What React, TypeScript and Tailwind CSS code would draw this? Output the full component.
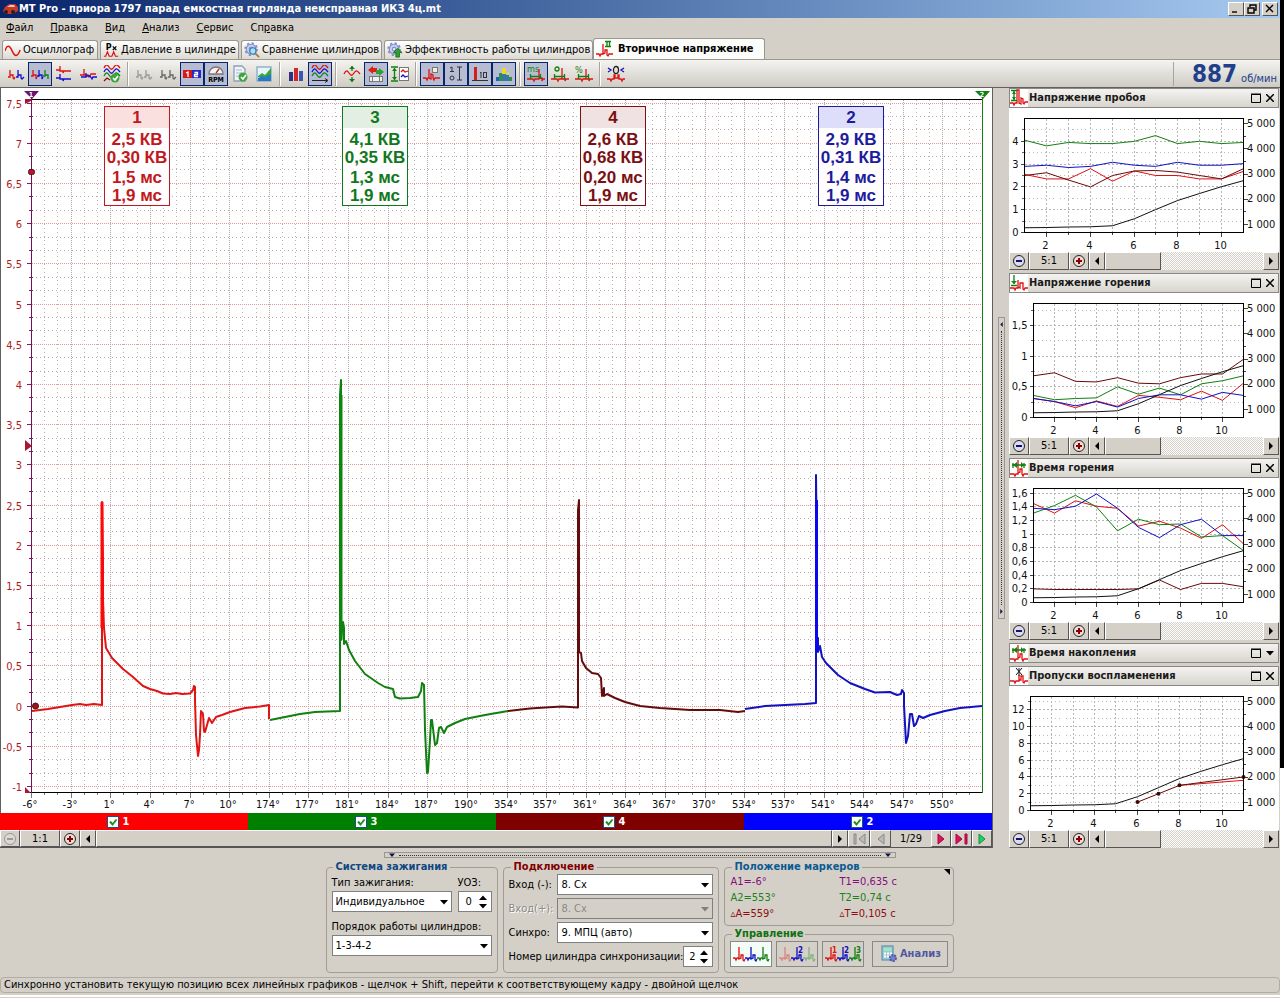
import React from 'react';

type Pt = [number, number];

const RED = '#e01010';
const GREEN = '#108010';
const MAROON = '#6a0808';
const BLUE = '#1010c8';

const bevel =
  'flex items-center justify-center bg-[#d4d0c8] border border-t-white border-l-white border-r-[#555] border-b-[#555]';

/* ---------- small shared bits ---------- */

const Arrow: React.FC<{ dir: 'left' | 'right' | 'down' | 'up'; color?: string; size?: number }> = ({ dir, color = '#000', size = 8 }) => {
  const d = {
    left: 'M6 0v8L2 4z',
    right: 'M2 0v8l4-4z',
    down: 'M0 2h8L4 6.5z',
    up: 'M0 6h8L4 1.5z',
  }[dir];
  return (
    <svg width={size} height={size} viewBox="0 0 8 8" className="shrink-0" aria-hidden="true">
      <path d={d} fill={color} />
    </svg>
  );
};

const ZoomSign: React.FC<{ kind: 'minus' | 'plus'; off?: boolean }> = ({ kind, off }) => {
  const c = off ? '#999' : kind === 'minus' ? '#10107a' : '#8c0000';
  return (
    <svg width="14" height="14" viewBox="0 0 14 14" aria-hidden="true">
      <circle cx="7" cy="7" r="5.5" fill={off ? '#dddad4' : kind === 'minus' ? '#dcdcec' : '#f0dcd8'} stroke={off ? '#999' : '#222'} />
      <path d={kind === 'minus' ? 'M4 7h6' : 'M4 7h6M7 4v6'} stroke={c} strokeWidth="2" />
    </svg>
  );
};

/* ---------- toolbar icons ---------- */

const S: React.FC<{ children: React.ReactNode; size?: number; className?: string }> = ({ children, size = 18, className = '' }) => (
  <svg width={size} height={size} viewBox="0 0 18 18" fill="none" strokeWidth="1.3" aria-hidden="true" className={`shrink-0 ${className}`}>
    {children}
  </svg>
);

const Wave: React.FC<{ y: number; c: string }> = ({ y, c }) => (
  <path d={`M1 ${y + 2}c2-4 3-4 5-1s3 3 5 0 3-3 6 1`} stroke={c} />
);

const PulseIcon: React.FC<{ a: string; b: string }> = ({ a, b }) => (
  <S>
    <path d="M1 12h2V5v5h3v3l1 1 1-2" stroke={a} />
    <path d="M9 12h2V5v5h3v3l1 1 2-2" stroke={b} />
  </S>
);

const icons: Record<string, React.ReactNode> = {
  parade: <PulseIcon a="#e01010" b="#1010d0" />,
  paradeAll: (
    <S>
      <path d="M0 11h2V5v5h3v4l1-2" stroke="#e01010" />
      <path d="M6 11h2V5v5h3v4l1-2" stroke="#1010d0" />
      <path d="M12 11h2V5v5h3v4" stroke="#108010" />
    </S>
  ),
  raster: (
    <S>
      <path d="M1 5h4V1v5h3v2l1-2h7" stroke="#e01010" />
      <path d="M1 13h4V9v5h3v2l1-2h7" stroke="#1010d0" />
    </S>
  ),
  overlay: (
    <S>
      <path d="M1 10h4V4v6h4l1 2 2-3h5" stroke="#e01010" />
      <path d="M2 12h5V8v3h4l2 3 1-2h4" stroke="#1010d0" />
    </S>
  ),
  wavesOk: (
    <S>
      <Wave y={1} c="#e01010" />
      <Wave y={5} c="#1010d0" />
      <Wave y={9} c="#108010" />
      <path d="M1 16l3-3 3 2" stroke="#8a1010" />
      <circle cx="12" cy="13" r="4.5" fill="#3fa63f" />
      <path d="M10 13l2 2 3-4" stroke="#fff" strokeWidth="1.6" />
    </S>
  ),
  offA: <PulseIcon a="#999" b="#999" />,
  offB: <PulseIcon a="#666" b="#666" />,
  onetwo: (
    <S>
      <rect x="0" y="5" width="9" height="8" fill="#d81818" />
      <rect x="9" y="5" width="9" height="8" fill="#2828c8" />
      <path d="M3 8l2-1v5M11.5 7.500h3v2h-3v2h3.500" stroke="#fff" />
    </S>
  ),
  rpm: (
    <S>
      <path d="M2 9a7 7 0 0 1 14 0z" fill="#f4f4f4" stroke="#777" />
      <path d="M9 8l3-4" stroke="#d02020" />
      <text x="9" y="17" fontSize="7" fontWeight="bold" fill="#000" textAnchor="middle">RPM</text>
    </S>
  ),
  pageOk: (
    <S>
      <path d="M3 1h8l3 3v12H3z" fill="#eef4fa" stroke="#8aa0b8" />
      <path d="M5 5h6M5 8h6M5 11h4" stroke="#a8b8c8" strokeWidth="1" />
      <circle cx="12" cy="12" r="4.5" fill="#3fa63f" />
      <path d="M10 12l2 2 3-4" stroke="#fff" strokeWidth="1.6" />
    </S>
  ),
  chart: (
    <S>
      <rect x="2" y="2" width="14" height="14" fill="#e8f4fc" stroke="#88a8c0" />
      <path d="M3 11l4-3 3 2 6-7v9H3z" fill="#38a838" />
      <path d="M3 13l4-2 3 1 6-3v7H3z" fill="#2878c8" />
    </S>
  ),
  bars: (
    <S>
      <path d="M2 7h4v9H2z" fill="#303088" />
      <path d="M7 3h4v13H7z" fill="#d02828" />
      <path d="M12 6h4v10h-4z" fill="#3858b8" />
    </S>
  ),
  waves: (
    <S>
      <Wave y={1} c="#e01010" />
      <Wave y={5} c="#1010d0" />
      <Wave y={9} c="#108010" />
      <path d="M1 15.500h15M14 13.500l3 2-3 2" stroke="#222" strokeWidth="1" />
    </S>
  ),
  vstretch: (
    <S>
      <Wave y={7} c="#e01010" />
      <path d="M9 1v5M9 12v5" stroke="#108010" />
      <path d="M6 4l3-3 3 3zM6 14l3 3 3-3z" fill="#108010" />
    </S>
  ),
  swap: (
    <S>
      <path d="M1 5l5-4v2h4v4H6v2z" fill="#e02010" />
      <path d="M17 7l-5-4v2H9v4h3v2z" fill="#30a030" />
      <rect x="2.500" y="11.500" width="13" height="5" fill="#f0f0f0" stroke="#777" strokeWidth="1" />
      <path d="M5.500 12v4M12.500 12v4" stroke="#777" strokeWidth="1" />
    </S>
  ),
  vfit: (
    <S>
      <path d="M0 2h7M0 16h7M3.500 3v12" stroke="#108010" />
      <path d="M1 6l2.500-3L6 6zM1 12l2.500 3L6 12z" fill="#108010" />
      <rect x="8.500" y="2.500" width="9" height="13" fill="#fff" stroke="#777" strokeWidth="1" />
      <path d="M10 7l2-2 2 2 3-1" stroke="#e01010" />
      <path d="M10 12l2-2 2 2 3-1" stroke="#1010d0" />
    </S>
  ),
  flag: (
    <S>
      <path d="M0 13h3l1 2 1-2h1V4v9l2 1V9l2 1v3l1 2 1-2h5" stroke="#e01010" />
      <rect x="9.500" y="2.500" width="5" height="5" fill="#f4ecd8" stroke="#777" strokeWidth="1" />
    </S>
  ),
  scale: (
    <S>
      <path d="M3 3l2-1v4M3 6.500h4M10 2h5M10 15h5M12.500 2v13" stroke="#333" strokeWidth="1" />
      <circle cx="5" cy="13" r="2" stroke="#333" strokeWidth="1" />
    </S>
  ),
  bar10: (
    <S>
      <path d="M3 2h3v13H3z" fill="#d02020" />
      <path d="M1 15.500h16M9 8l1-1v6" stroke="#333" strokeWidth="1" />
      <rect x="12.500" y="7.500" width="3" height="5" stroke="#333" strokeWidth="1" />
    </S>
  ),
  histogram: (
    <S>
      <path d="M1 12h3v4H1z" fill="#2060c0" />
      <path d="M4 8h3v8H4zM14 12h3v4h-3z" fill="#2f9048" />
      <path d="M7 3h4v6H7zM12 7h2v4h-2z" fill="#e8d830" />
      <path d="M7 9h4v7H7zM11 10h3v6h-3z" fill="#3878a8" />
    </S>
  ),
  ms: (
    <S>
      <text x="0" y="7" fontSize="9" fill="#108010">ms</text>
      <path d="M0 14h6l1 2 1-2h4V4v9h3v3l1-2h2" stroke="#e01010" />
      <path d="M3 11.500h11M3.500 9v5M13.500 9v5" stroke="#108010" />
    </S>
  ),
  deg: (
    <S>
      <circle cx="6" cy="4" r="2" stroke="#108010" />
      <path d="M0 14h6l1 2 1-2h3V3v11h3v2l1-2h3" stroke="#e01010" />
      <path d="M3 11.500h11M3.500 9v5M13.500 9v5" stroke="#108010" />
    </S>
  ),
  pct: (
    <S>
      <text x="0" y="8" fontSize="9" fill="#108010">%</text>
      <path d="M0 14h6l1 2 1-2h3V4v10h3v2l1-2h3" stroke="#e01010" />
      <path d="M3 11.500h11M3.500 9v5M13.500 9v5" stroke="#108010" />
    </S>
  ),
  zero: (
    <S>
      <path d="M1 3l3 2-3 2M17 3l-3 2 3 2" stroke="#1010b0" />
      <ellipse cx="9" cy="5" rx="2.500" ry="3.500" stroke="#222" />
      <path d="M0 14h3l1 2 1-2h2v-4h1v3h3v-3h1v4h2l1 2 1-2h2" stroke="#e01010" />
    </S>
  ),
};

/* ---------- header rows ---------- */

const toolGroups: [string, string, boolean?][][] = [
  [['parade', 'Парад'], ['paradeAll', 'Парад всех', true], ['raster', 'Растр'], ['overlay', 'Наложение'], ['wavesOk', 'Выбор сигналов']],
  [['offA', 'Кадр назад'], ['offB', 'Кадр вперёд'], ['onetwo', 'Номера цилиндров', true], ['rpm', 'Обороты', true], ['pageOk', 'Отчёт'], ['chart', 'График']],
  [['bars', 'Гистограмма'], ['waves', 'Осциллограммы', true]],
  [['vstretch', 'Растянуть'], ['swap', 'Инверсия', true], ['vfit', 'По высоте']],
  [['flag', 'Метки', true], ['scale', 'Шкала', true], ['bar10', 'Столбцы', true], ['histogram', 'Распределение', true]],
  [['ms', 'Миллисекунды', true], ['deg', 'Градусы'], ['pct', 'Проценты']],
  [['zero', 'Обнулить']],
];

const menu: [string, string, string][] = [
  ['', 'Ф', 'айл'],
  ['', 'П', 'равка'],
  ['', 'В', 'ид'],
  ['', 'А', 'нализ'],
  ['', 'С', 'ервис'],
  ['Сп', 'р', 'авка'],
];

const Gear: React.FC<{ children: React.ReactNode }> = ({ children }) => (
  <S size={16}>
    <circle cx="8" cy="8" r="5.500" fill="#c4d0ee" stroke="#8090c8" />
    <circle cx="8" cy="8" r="6.800" stroke="#8090c8" strokeWidth="1.800" strokeDasharray="2.600 2.700" />
    <circle cx="8" cy="8" r="2" fill="#f0f0f0" stroke="#8090c8" />
    {children}
  </S>
);

const tabs: { label: string; width: string; icon: React.ReactNode }[] = [
  {
    label: 'Осциллограф',
    width: 'w-24',
    icon: <S size={16}><path d="M0 10c2-7 5-7 8 0s6 7 9-1" stroke="#e01010" strokeWidth="1.600" /></S>,
  },
  {
    label: 'Давление в цилиндре',
    width: 'w-[139px]',
    icon: (
      <S size={16}>
        <text x="3" y="9" fontSize="10" fontWeight="bold" fill="#000">P</text>
        <path d="M11 5l4 4M15 5l-4 4" stroke="#000" />
        <path d="M1 16h2l2-5 2 5h3l2-5 2 5h3" stroke="#e01010" />
      </S>
    ),
  },
  {
    label: 'Сравнение цилиндров',
    width: 'w-[141px]',
    icon: (
      <Gear>
        <circle cx="10" cy="10" r="3.500" fill="#a8e0f4" stroke="#3878b0" />
        <path d="M13 13l4 4" stroke="#b07838" strokeWidth="2" />
      </Gear>
    ),
  },
  {
    label: 'Эффективность работы цилиндров',
    width: 'w-[209px]',
    icon: <Gear><path d="M12 7l5 5h-3v5h-4v-5H7z" fill="#30a030" stroke="#207020" strokeWidth="1" /></Gear>,
  },
];

/* ---------- main oscillogram ---------- */

const traces: { color: string; d: string }[] = [
  {
    color: '#e01414',
    d: 'M32 711L40 710 48 709 60 707 72 705 80 704 86 705 94 704 102 705V502L103 560V600L104 628 106 648 112 658 123 669 133 677 143 686 150 689 157 691 163 693.5 170 694 176 693 182 694 190 693.5 193 690 194 686 195 687 195 700 196 735 198 756 199 750 200 735 201 711 203 714 204 731 205 732 207 725 209 718 212 723 216 717 222 715 230 712 245 708 260 706.5 269 705V719',
  },
  {
    color: '#108010',
    d: 'M270 720L285 717 300 714 315 712 340 711V395L341 380V640L343 622 344 628V644L346 641 349 650 355 661 365 674 378 683 385 687 393 689 395 697 400 698.5 410 698 418 697 421 691 422 683 424 685 425 730 427 773 428 772 430 740 431 720 432 720 435 745 437 743 439 728 441 727 444 733 447 727 455 723 465 719 485 715 508 711',
  },
  {
    color: '#640c0c',
    d: 'M508 711L530 708.5 545 707.5 562 706.5 578 707.5V510L579 500V652L581 653 582 661 586 668 592 673 598 674 601 678 602 696 604 688V696L607 694 615 698 625 702 640 706 660 708 690 710 700 710 720 710 738 712 745 711',
  },
  {
    color: '#1212c0',
    d: 'M745 709L765 706 785 705 805 704 816 703V475L817 560V650L818 638V652L820 646 822 657 826 663 838 675 850 683 865 689 875 692.5 890 692 897 695 901 694 902 690 904 693V705L906 743 908 736 910 714 912 714 914 726 916 724 919 716 923 718 930 715 945 711 960 708 982 706',
  },
];

// the ignition peaks are drawn a little heavier than the rest of the trace
const spikes: { d: string; color: string }[] = [
  { d: 'M102 502V628', color: '#ff0808' },
  { d: 'M341 395V640', color: '#0c860c' },
  { d: 'M578.5 510V652', color: '#640c0c' },
  { d: 'M816.5 500V652', color: '#0808f0' },
];

const degrees = ['-6', '-3', '1', '4', '7', '10', '174', '177', '181', '184', '187', '190', '354', '357', '361', '364', '367', '370', '534', '537', '541', '544', '547', '550'];

const cards = [
  { x: 104, id: '1', rows: ['2,5 КВ', '0,30 КВ', '1,5 мс', '1,9 мс'], color: '#c01820', fill: '#fbe0e0' },
  { x: 342, id: '3', rows: ['4,1 КВ', '0,35 КВ', '1,3 мс', '1,9 мс'], color: '#107820', fill: '#e2efe2' },
  { x: 580, id: '4', rows: ['2,6 КВ', '0,68 КВ', '0,20 мс', '1,9 мс'], color: '#7a1014', fill: '#f0e2e2' },
  { x: 818, id: '2', rows: ['2,9 КВ', '0,31 КВ', '1,4 мс', '1,9 мс'], color: '#1c1c9c', fill: '#dedefa' },
];

const range = (n: number) => Array.from({ length: n }, (_, i) => i);
const volts = (v: number) => Math.round(705.5 - v * 80.4) + 0.5;

const Oscillogram: React.FC = () => (
  <svg viewBox="0 88 992 725" className="block h-auto w-full bg-white" role="img" aria-label="Вторичное напряжение">
    <g shapeRendering="crispEdges" strokeWidth="1" fill="none">
      <path d="M0.5 88V813" stroke="#606060" />
      {range(53).map(i => {
        const y = volts(7.5 - i / 6);
        return y < 791 && (
          <path key={i} d={`M32 ${y}H982`} stroke={i % 3 ? '#c4a8a8' : '#e09a9a'} strokeDasharray={i % 3 ? '1 3' : '1 1'} />
        );
      })}
      {range(71).map(i => {
        const x = Math.round(31 + (i + 1) * 13.21) + 0.5;
        return <path key={i} d={`M${x} 100V792`} stroke={i % 3 === 2 ? '#b0a8a8' : '#c0b4b4'} strokeDasharray={i % 3 === 2 ? '1 1' : '1 3'} />;
      })}
      <path d="M31 99.5H982M27 792.5H982" stroke="#000" />
      <path d="M31.5 92V793" stroke="#701060" />
      <path d="M982.5 92V793" stroke="#108010" />
      {range(53).map(i => {
        const y = volts(7.5 - i / 6);
        return y < 791 && <path key={i} d={i % 3 ? `M29 ${y}h4` : `M27 ${y}h5`} stroke="#8a1848" />;
      })}
      {range(72).map(i => (
        <path key={i} d={`M${Math.round(31 + i * 13.21) + 0.5} 793v${i % 3 ? 2 : 5}`} stroke="#777" />
      ))}
    </g>

    <g fontSize="11" fill="#b01c24" textAnchor="end">
      {range(18).map(i => (
        <text key={i} x="22" y={volts(7.5 - i / 2) + 4}>{String(7.5 - i / 2).replace('.', ',')}</text>
      ))}
    </g>
    <g fontSize="11" fill="#111" textAnchor="middle">
      {degrees.map((d, i) => (
        <text key={i} x={Math.round(30 + i * 39.64)} y="808">{d}°</text>
      ))}
    </g>

    {cards.map(c => (
      <g key={c.id} fontFamily="Liberation Sans, sans-serif" fontSize="17" fontWeight="bold" fill={c.color} textAnchor="middle">
        <rect x={c.x + 0.5} y="106.5" width="65" height="99" fill="#fffdfd" stroke={c.color} />
        <rect x={c.x + 1} y="107" width="64" height="21" fill={c.fill} />
        <text x={c.x + 33} y="123">{c.id}</text>
        {c.rows.map((r, i) => (
          <text key={i} x={c.x + 33} y={[145, 163, 183, 201][i]}>{r}</text>
        ))}
      </g>
    ))}

    {traces.map(t => (
      <path key={t.color} d={t.d} stroke={t.color} strokeWidth="2" fill="none" strokeLinejoin="round" />
    ))}
    {spikes.map(s => (
      <path key={s.d} d={s.d} stroke={s.color} strokeWidth="3" />
    ))}

    {/* markers on the axes */}
    <path d="M24 91h15l-7 8z" fill="#681470" />
    <path d="M975 91h15l-7 8z" fill="#108010" />
    <g fontSize="7" fontWeight="bold" fill="#fff" textAnchor="middle">
      <text x="31" y="97">1</text>
      <text x="982" y="97">2</text>
    </g>
    <path d="M25 99h6v2l-6 3zM25 787v6h6zM25 440v11l7-5z" fill="#a81830" />
    <rect x="28.5" y="169.5" width="6" height="5" rx="2" fill="#b81830" stroke="#5a1010" />
    <circle cx="35.5" cy="706" r="3" fill="#981818" stroke="#5a1010" />
  </svg>
);

const cylinders: [string, string][] = [
  ['1', 'bg-[#ff0000]'],
  ['3', 'bg-[#008000]'],
  ['4', 'bg-[#800000]'],
  ['2', 'bg-[#0000ff]'],
];

const CylinderBar: React.FC = () => (
  <div className="flex h-[17px]">
    {cylinders.map(([n, bg]) => (
      <label key={n} className={`flex flex-1 items-center justify-center gap-1 pr-3 font-bold text-white ${bg}`}>
        <span className="relative h-3 w-3">
          <input type="checkbox" defaultChecked className="peer block h-3 w-3 appearance-none border border-[#1c5180] bg-white" />
          <svg viewBox="0 0 12 12" className="pointer-events-none invisible absolute inset-0 h-3 w-3 peer-checked:visible" fill="none" aria-hidden="true">
            <path d="M3 5.5l2.5 3 4-5" stroke="#219021" strokeWidth="2" />
          </svg>
        </span>
        {n}
      </label>
    ))}
  </div>
);

const MainScroll: React.FC = () => (
  <div className="flex h-[18px] border-b border-[#555] bg-[#d4d0c8]">
    <button disabled aria-label="Уменьшить" className={`w-5 ${bevel}`}><ZoomSign kind="minus" off /></button>
    <button className={`w-10 ${bevel}`}>1:1</button>
    <button aria-label="Увеличить" className={`w-5 ${bevel}`}><ZoomSign kind="plus" /></button>
    <button aria-label="Влево" className={`w-4 ${bevel}`}><Arrow dir="left" /></button>
    <div className={`flex-1 ${bevel}`} />
    <button aria-label="Вправо" className={`w-4 ${bevel}`}><Arrow dir="right" /></button>
    <button disabled aria-label="Первый кадр" className={`w-[22px] ${bevel}`}>
      <svg width="13" height="12" viewBox="0 0 13 12" fill="#bbb" stroke="#888"><path d="M1 1h2v10H1zM12 1v10L6 6z" /></svg>
    </button>
    <button disabled aria-label="Предыдущий кадр" className={`w-[21px] ${bevel}`}>
      <svg width="8" height="12" viewBox="0 0 8 12" fill="#bbb" stroke="#888"><path d="M7 1v10L1 6z" /></svg>
    </button>
    <span className="flex w-10 items-center justify-center">1/29</span>
    <button aria-label="Следующий кадр" className={`w-5 ${bevel}`}>
      <svg width="8" height="12" viewBox="0 0 8 12" fill="#e01060" stroke="#a00840"><path d="M1 1v10l6-5z" /></svg>
    </button>
    <button aria-label="Последний кадр" className={`w-[21px] ${bevel}`}>
      <svg width="13" height="12" viewBox="0 0 13 12" fill="#e01060" stroke="#a00840"><path d="M1 1v10l6-5zM10 1h2v10h-2z" /></svg>
    </button>
    <button aria-label="Воспроизвести" className={`w-5 ${bevel}`}>
      <svg width="8" height="12" viewBox="0 0 8 12" fill="#20d060" stroke="#109040"><path d="M1 1v10l6-5z" /></svg>
    </button>
  </div>
);

/* ---------- side panels ---------- */

interface MiniProps {
  title: string;
  left: number;
  max: number;
  step: number;
  minor?: number;
  series: { color: string; pts: Pt[] }[];
  dots?: Pt[];
}

const seq = (v: number[]): Pt[] => v.map((y, i) => [i + 1, y]);
const rpm = [870, 880, 900, 910, 950, 1230, 1590, 1950, 2230, 2500, 2740];

const MiniChart: React.FC<MiniProps> = ({ title, left, max, step, minor, series, dots = [] }) => {
  const right = 234.5;
  const px = (x: number) => Math.round(left + ((x - 1) * (right - left)) / 10 - 0.5) + 0.5;
  const py = (v: number) => 124.5 - (v / max) * 114;
  const ry = (r: number) => 116.5 - (r - 1000) * 0.0252;
  const line = (pts: Pt[], f: (v: number) => number) => pts.map(([x, v]) => `${px(x)},${f(v)}`).join(' ');
  const snap = (v: number) => Math.round(py(v) - 0.5) + 0.5;
  const majors = range(Math.floor(max / step + 0.01) + 1).map(i => i * step);
  // a label right on the top edge is left out
  const visible = majors.filter(v => v < max - 0.01);
  const minors = minor ? range(Math.floor(max / minor)).filter(i => i % 2 === 0).map(i => (i + 1) * minor) : [];
  return (
    <svg viewBox="0 0 270 144" className="block h-auto w-full bg-white" role="img" aria-label={title} fill="none">
      <g shapeRendering="crispEdges">
        {range(9).map(i => (
          <path key={i} d={`M${px(i + 2)} 11V124`} stroke="#b4b4b4" strokeDasharray="2 2" />
        ))}
        {visible.slice(1).map(v => <path key={v} d={`M${left} ${snap(v)}H234`} stroke="#b4b4b4" strokeDasharray="2 2" />)}
        {minors.map(v => <path key={v} d={`M${left - 3} ${snap(v)}h3`} stroke="#666" />)}
        {minors.map(v => <path key={v} d={`M${left} ${snap(v)}H234`} stroke="#bcbcbc" strokeDasharray="1 3" />)}
        {visible.map(v => <path key={v} d={`M${left - 4} ${snap(v)}h4`} stroke="#444" />)}
        {range(9).map(i => <path key={i} d={`M${px(i + 2)} 125v${i % 2 ? 2 : 4}`} stroke="#444" />)}
        {range(9).map(i => (
          <path key={i} d={`M235 ${Math.round(ry(1000 + i * 500) - 0.5) + 0.5}h${i % 2 ? 2 : 4}`} stroke="#444" />
        ))}
      </g>
      {series.map(s => <polyline key={s.color} points={line(s.pts, py)} stroke={s.color} />)}
      <polyline points={line(seq(rpm), ry)} stroke="#111" />
      {dots.map(([x, v]) => <circle key={x} cx={px(x)} cy={py(v)} r="2" fill="#3a0808" />)}
      <rect x={left} y="10.5" width={right - left} height="114" stroke="#000" shapeRendering="crispEdges" />
      <g fontSize="11" fill="#111">
        {visible.map(v => (
          <text key={v} x={left - 6} y={snap(v) + 3} textAnchor="end">{String(Math.round(v * 10) / 10).replace('.', ',')}</text>
        ))}
        {[2, 4, 6, 8, 10].map(v => <text key={v} x={px(v) - 1} y="141" textAnchor="middle">{v}</text>)}
        {[1, 2, 3, 4, 5].map(v => <text key={v} x="238" y={ry(v * 1000) + 3}>{v} 000</text>)}
      </g>
    </svg>
  );
};

const panelIcons: Record<string, React.ReactNode> = {
  peak: (
    <S className="bg-white">
      <path d="M0 14h3l1 2 1-2h2V1h2v13l2 1V9l2 1v4l1 1 1-2h3" stroke="#e01010" />
      <path d="M1 1.5h6M1 11.5h6M4 2v9" stroke="#108010" />
      <path d="M2 5l2-3 2 3zM2 8l2 3 2-3z" fill="#108010" />
    </S>
  ),
  burn: (
    <S className="bg-white">
      <path d="M0 14h4l1 2 1-2h2V6v7l2 1V9h3v6l1 1 1-2h3" stroke="#e01010" />
      <path d="M1 11.5h6M4 1v9" stroke="#108010" />
      <path d="M1 7l3 3 3-3z" fill="#108010" />
    </S>
  ),
  time: (
    <S className="bg-white">
      <path d="M0 15h4l1 2 1-2h2V1v13l2-1v-3h2v5l1 2 1-2h4" stroke="#e01010" />
      <path d="M2 6h14M3 4v5M14 4v5" stroke="#108010" />
      <path d="M3 6l4-3v6zM14 6l-3-3v6z" fill="#108010" />
    </S>
  ),
  miss: (
    <S className="bg-white">
      <path d="M0 14h4l1 2 1-2h3V8v5h2V9h2v6l1 1 1-2h3" stroke="#e01010" />
      <path d="M6 1l6 7M12 1L6 8M9 1v8" stroke="#111" strokeWidth="1" />
    </S>
  ),
};

const PanelHeader: React.FC<{ title: string; icon: string; collapsed?: boolean }> = ({ title, icon, collapsed }) => (
  <div className="flex h-5 items-center border border-[#888] bg-linear-to-b from-[#f4f3f0] to-[#d8d5ce] pr-[1px]">
    {panelIcons[icon]}
    <h2 className="flex-1 whitespace-nowrap pl-[1px] font-bold text-[#1a1a1a]">{title}</h2>
    <button aria-label="Развернуть" className="flex w-[14px] justify-center">
      <svg width="10" height="10" viewBox="0 0 10 10" fill="none"><path d="M.5 1.5h9v8h-9z" stroke="#000" /><path d="M0 1h10" stroke="#000" /></svg>
    </button>
    <button aria-label={collapsed ? 'Показать' : 'Закрыть'} className="flex w-[14px] justify-center">
      {collapsed ? <Arrow dir="down" /> : (
        <svg width="8" height="8" viewBox="0 0 8 8"><path d="M0 0l8 8M8 0L0 8" stroke="#000" strokeWidth="1.5" /></svg>
      )}
    </button>
  </div>
);

const MiniScroll: React.FC = () => (
  <div className="flex h-[18px] bg-[repeating-conic-gradient(#ffffff_0_25%,#d4d0c8_0_50%)] bg-[length:2px_2px]">
    <button aria-label="Уменьшить" className={`w-5 ${bevel}`}><ZoomSign kind="minus" /></button>
    <button className={`w-10 ${bevel}`}>5:1</button>
    <button aria-label="Увеличить" className={`w-5 ${bevel}`}><ZoomSign kind="plus" /></button>
    <button aria-label="Влево" className={`w-4 ${bevel}`}><Arrow dir="left" /></button>
    <div className={`w-14 ${bevel}`} />
    <button aria-label="Вправо" className={`ml-auto w-4 ${bevel}`}><Arrow dir="right" /></button>
  </div>
);

const panels: (MiniProps & { icon: string })[] = [
  {
    title: 'Напряжение пробоя', icon: 'peak', left: 15.5, max: 5, step: 1, minor: 0.5,
    series: [
      { color: GREEN, pts: seq([4.05, 3.8, 3.95, 3.9, 3.9, 4, 4.25, 3.9, 4, 3.9, 3.95]) },
      { color: BLUE, pts: seq([2.9, 2.95, 2.85, 2.9, 3.08, 2.95, 2.9, 3.08, 2.95, 2.95, 3.02]) },
      { color: RED, pts: seq([2.55, 2.35, 2.35, 2.8, 2.25, 2.7, 2.5, 2.5, 2.35, 2.35, 2.68]) },
      { color: MAROON, pts: seq([2.5, 2.62, 2.3, 2, 2.5, 2.7, 2.72, 2.65, 2.5, 2.35, 2.8]) },
    ],
  },
  {
    title: 'Напряжение горения', icon: 'burn', left: 24.5, max: 1.86, step: 0.5, minor: 0.25,
    series: [
      { color: MAROON, pts: seq([0.68, 0.73, 0.59, 0.58, 0.65, 0.56, 0.55, 0.65, 0.71, 0.71, 0.95]) },
      { color: GREEN, pts: seq([0.36, 0.29, 0.31, 0.32, 0.5, 0.38, 0.48, 0.37, 0.55, 0.6, 0.68]) },
      { color: RED, pts: seq([0.31, 0.26, 0.16, 0.27, 0.18, 0.36, 0.33, 0.29, 0.43, 0.28, 0.56]) },
      { color: BLUE, pts: seq([0.31, 0.26, 0.19, 0.26, 0.17, 0.31, 0.37, 0.37, 0.3, 0.41, 0.36]) },
    ],
  },
  {
    title: 'Время горения', icon: 'time', left: 24.5, max: 1.67, step: 0.2,
    series: [
      { color: RED, pts: seq([1.45, 1.31, 1.49, 1.41, 1.38, 1.12, 1.19, 1.09, 0.94, 1.14, 0.86]) },
      { color: GREEN, pts: seq([1.31, 1.42, 1.57, 1.4, 1.05, 1.22, 1.14, 1.15, 0.96, 0.98, 0.76]) },
      { color: BLUE, pts: seq([1.38, 1.36, 1.41, 1.59, 1.38, 1.1, 0.95, 1.14, 1.22, 0.98, 0.98]) },
      { color: MAROON, pts: seq([0.2, 0.19, 0.19, 0.19, 0.19, 0.2, 0.33, 0.19, 0.28, 0.28, 0.23]) },
    ],
  },
  {
    title: 'Пропуски воспламенения', icon: 'miss', left: 21.5, max: 13.6, step: 2, minor: 1,
    series: [
      { color: RED, pts: [[8, 3], [11, 3.6]] },
      { color: MAROON, pts: [[6, 1], [7, 2], [8, 3], [11, 4]] },
    ],
    dots: [[6, 1], [7, 2], [8, 3], [11, 4]],
  },
];

const SidePanel: React.FC<{ p: MiniProps & { icon: string } }> = ({ p }) => (
  <section>
    <PanelHeader title={p.title} icon={p.icon} />
    <MiniChart {...p} />
    <MiniScroll />
  </section>
);

/* ---------- bottom controls ---------- */

const Pick: React.FC<{ id: string; options: string[]; disabled?: boolean; className: string }> = ({ id, options, disabled, className }) => (
  <div className={`relative ${className}`}>
    <select
      id={id}
      disabled={disabled}
      className="block h-[21px] w-full appearance-none border border-[#808080] bg-white px-[3px] text-black disabled:bg-[#d4d0c8] disabled:text-[#8a8a88] disabled:opacity-100"
    >
      {options.map(o => <option key={o}>{o}</option>)}
    </select>
    <span className="pointer-events-none absolute right-1 top-[7px]"><Arrow dir="down" color={disabled ? '#808080' : '#000'} /></span>
  </div>
);

const Spin: React.FC<{ id: string; value: string; className: string }> = ({ id, value, className }) => (
  <div className={`flex h-[21px] border border-[#808080] bg-white ${className}`}>
    <input id={id} type="text" defaultValue={value} className="w-0 flex-1 bg-transparent text-center outline-none" />
    <span className="flex w-3 flex-col justify-between py-[2px]">
      <button aria-label="Больше" className="h-[7px] overflow-hidden"><Arrow dir="up" /></button>
      <button aria-label="Меньше" className="h-[7px] overflow-hidden"><Arrow dir="down" /></button>
    </span>
  </div>
);

const ModeIcon: React.FC<{ numbers: number[]; dim?: boolean }> = ({ numbers, dim }) => {
  const colors = ['#e01010', '#1010c0', '#108010'];
  return (
    <svg width="38" height="18" viewBox="0 0 38 18" fill="none" aria-hidden="true">
      {colors.map((c, i) => (
        <g key={c} transform={`translate(${i * 12 + 1} 0)`} stroke={c} opacity={dim && i !== 1 ? 0.4 : 1}>
          <path d="M0 13h2l1 2 1-2h2V2v12l2-1v-3h2v5l1 1 1-2" strokeWidth="1.3" />
          {numbers.includes(i) && (
            <text x="7" y="8" fontSize="8" fontWeight="bold" fill={c} stroke="none">{i + 1}</text>
          )}
        </g>
      ))}
    </svg>
  );
};

const box = 'rounded border border-[#a09d96]';
const modeButton = 'flex h-[26px] w-[42px] items-center justify-center border border-[#888]';

const BottomControls: React.FC = () => (
  <div className="flex items-start justify-center gap-[5px]">
    <fieldset className={`h-[113px] w-[172px] px-[5px] ${box}`}>
      <legend className="ml-[1px] px-[3px] font-bold leading-[14px] text-[#104880]">Система зажигания</legend>
      <div className="flex justify-between">
        <label htmlFor="type" className="leading-[17px]">Тип зажигания:</label>
        <label htmlFor="uoz" className="w-[34px] leading-[17px]">УОЗ:</label>
      </div>
      <div className="flex justify-between">
        <Pick id="type" options={['Индивидуальное']} className="w-[120px]" />
        <Spin id="uoz" value="0" className="w-[34px]" />
      </div>
      <label htmlFor="order" className="mt-[6px] block leading-[17px]">Порядок работы цилиндров:</label>
      <Pick id="order" options={['1-3-4-2']} className="w-full" />
    </fieldset>

    <fieldset className={`h-[113px] w-[215px] px-[5px] ${box}`}>
      <legend className="ml-[2px] px-[3px] font-bold leading-[14px] text-[#800000]">Подключение</legend>
      <div className="flex flex-col gap-[3px]">
        <div className="flex items-center justify-between">
          <label htmlFor="minus">Вход (-):</label>
          <Pick id="minus" options={['8. Cx']} className="w-[156px]" />
        </div>
        <div className="flex items-center justify-between">
          <label htmlFor="plus" className="text-[#8a8a88] [text-shadow:1px_1px_0_#fff]">Вход(+):</label>
          <Pick id="plus" options={['8. Cx']} disabled className="w-[156px]" />
        </div>
        <div className="flex items-center justify-between">
          <label htmlFor="sync">Синхро:</label>
          <Pick id="sync" options={['9. МПЦ (авто)']} className="w-[156px]" />
        </div>
        <div className="flex items-center justify-between">
          <label htmlFor="num" className="whitespace-nowrap">Номер цилиндра синхронизации:</label>
          <Spin id="num" value="2" className="w-[30px]" />
        </div>
      </div>
    </fieldset>

    <div className="w-[230px]">
      <fieldset className={`relative h-[66px] px-[5px] ${box}`}>
        <legend className="ml-[2px] px-[2px] font-bold leading-[14px] text-[#0c5a90]">Положение маркеров</legend>
        <svg width="6" height="6" viewBox="0 0 6 6" className="absolute right-[3px] top-[-5px]" aria-hidden="true"><path d="M0 0h6v6z" /></svg>
        <div className="grid grid-cols-2 leading-4">
          <span className="text-[#880c80]">A1=-6°</span>
          <span className="text-[#880c80]">T1=0,635 с</span>
          <span className="text-[#208020]">A2=553°</span>
          <span className="text-[#208020]">T2=0,74 с</span>
          <span className="text-[#900c10]">▵A=559°</span>
          <span className="text-[#900c10]">▵T=0,105 с</span>
        </div>
      </fieldset>
      <fieldset className={`mt-[1px] h-[46px] px-[5px] ${box}`}>
        <legend className="ml-[2px] px-[2px] font-bold leading-[14px] text-[#107010]">Управление</legend>
        <div className="flex gap-1">
          <button aria-label="Все цилиндры" className={`bg-[#f4fcf8] ${modeButton}`}><ModeIcon numbers={[]} /></button>
          <button aria-label="Один цилиндр" className={modeButton}><ModeIcon numbers={[1]} dim /></button>
          <button aria-label="По порядку" className={modeButton}><ModeIcon numbers={[0, 1, 2]} /></button>
          <button className="ml-1 flex h-[26px] w-[76px] items-center justify-center gap-[2px] border border-[#888] font-bold text-[#5058a0]">
            <S>
              <rect x="2" y="1" width="11" height="14" fill="#9cc8d8" stroke="#6898b0" />
              <rect x="3.5" y="3" width="8" height="3" fill="#a0e8b0" />
              <path d="M4 8.5h8M4 11.5h8" stroke="#fff" strokeDasharray="2 1" strokeWidth="2" />
              <circle cx="13" cy="13" r="3" fill="#7880c8" stroke="#5058a8" strokeWidth="2" strokeDasharray="2 1" />
            </S>
            Анализ
          </button>
        </div>
      </fieldset>
    </div>
  </div>
);

const WinButton: React.FC<{ label: string; d: string; className?: string }> = ({ label, d, className = '' }) => (
  <button aria-label={label} className={`h-[14px] w-4 ${bevel} ${className}`}>
    <svg width="10" height="10" viewBox="0 0 10 10" fill="none"><path d={d} stroke="#000" strokeWidth="1.4" /></svg>
  </button>
);

const App: React.FC = () => (
  <div className="flex min-h-screen w-full items-start bg-white font-['DejaVu_Sans_Condensed','DejaVu_Sans',sans-serif] text-[11px] leading-[14px] text-black">
    <div className="min-w-0 flex-1 bg-[#d4d0c8]">
      <header>
        <div className="flex h-[18px] items-center bg-linear-to-r from-[#0a246a] to-[#a6caf0] px-[2px] text-white">
          <svg width="17" height="14" viewBox="0 0 17 14" aria-hidden="true">
            <path d="M1 9l2-4 4-3h6l3 3v4l-5 3H3z" fill="#c83828" />
            <path d="M5 5l3-2h4l1 2z" fill="#e8c8c0" />
            <circle cx="4" cy="10" r="2" fill="#222" />
            <circle cx="11" cy="10" r="2" fill="#222" />
          </svg>
          <h1 className="flex-1 whitespace-nowrap font-bold">MT Pro - приора 1797 парад емкостная гирлянда неисправная ИКЗ 4ц.mt</h1>
          <WinButton label="Свернуть" d="M1 8h5" />
          <WinButton label="Восстановить" d="M3 3V1h6v5H7M1 4h6v5H1z" />
          <WinButton label="Закрыть" d="M1 1l7 7M8 1L1 8" className="ml-[2px]" />
        </div>

        <nav className="flex h-5 items-center gap-[17px] px-[6px]">
          {menu.map(([pre, key, rest]) => (
            <button key={rest}>{pre}<u>{key}</u>{rest}</button>
          ))}
        </nav>

        <div role="tablist" className="flex h-[22px] items-end gap-[2px] border-b border-[#989890] pl-[2px]">
          {tabs.map(t => (
            <button
              key={t.label}
              role="tab"
              aria-selected="false"
              className={`flex h-[19px] shrink-0 items-center gap-[2px] whitespace-nowrap rounded-t-[3px] border border-b-0 border-[#989890] bg-linear-to-b from-white to-[#dddad2] pl-[2px] ${t.width}`}
            >
              {t.icon}
              {t.label}
            </button>
          ))}
          <button role="tab" aria-selected="true" className="-ml-[2px] flex h-[21px] w-[172px] shrink-0 items-center gap-1 whitespace-nowrap rounded-t-[3px] border border-b-0 border-[#989890] bg-[#fcfcfb] pl-[2px] font-bold">
            <S>
              <path d="M0 14h3l1 2 1-2h2V4v10l2-1v-3h2v5l1 1 1-2h4" stroke="#e01010" />
              <path d="M9 1.5h6M9 6.5h6M11 1v6M13.5 1v6" stroke="#108010" />
            </S>
            Вторичное напряжение
          </button>
        </div>

        <div className="flex h-7 items-center border-b border-[#606060] bg-linear-to-b from-[#f4f3f0] to-[#cfccc4] pl-1">
          {toolGroups.map((g, gi) => (
            <React.Fragment key={gi}>
              {gi > 0 && <span className="mx-[3px] h-6 w-[2px] border-l border-[#a8a59e] bg-white" />}
              {g.map(([id, label, on]) => (
                <button
                  key={id}
                  aria-label={label}
                  aria-pressed={!!on}
                  className={`flex h-6 w-6 items-center justify-center ${on ? 'border border-[#0a246a] bg-[#b6bdd2]' : ''}`}
                >
                  {icons[id]}
                </button>
              ))}
            </React.Fragment>
          ))}
          <div className="ml-auto flex h-6 w-[107px] items-baseline gap-1 border-l border-[#a8a59e] pl-[18px] text-[#20408c]">
            <strong className="text-[24px] leading-6">887</strong>
            <span>об/мин</span>
          </div>
        </div>
      </header>

      <main className="flex">
        <div className="min-w-0 flex-1 border-r border-[#606060]">
          <Oscillogram />
          <CylinderBar />
          <MainScroll />
        </div>

        <div className="flex w-4 shrink-0 items-center justify-center">
          <div className="flex h-[302px] w-[7px] flex-col items-center justify-between border border-[#989890] py-1">
            <Arrow dir="left" color="#10104a" size={5} />
            <span className="my-1 flex-1 border-l border-dotted border-[#333]" />
            <Arrow dir="right" color="#10104a" size={5} />
          </div>
        </div>

        <aside className="mr-[1px] flex w-[270px] shrink-0 flex-col gap-[3px]">
          <SidePanel p={panels[0]} />
          <SidePanel p={panels[1]} />
          <SidePanel p={panels[2]} />
          <PanelHeader title="Время накопления" icon="time" collapsed />
          <SidePanel p={panels[3]} />
        </aside>
      </main>

      <div className="flex h-3 items-center justify-center pt-[2px]">
        <div className="flex h-[6px] w-[512px] items-center gap-1 border border-[#989890] px-1">
          <Arrow dir="down" color="#10104a" size={6} />
          <span className="flex-1 border-t border-dotted border-[#333]" />
          <Arrow dir="down" color="#10104a" size={6} />
        </div>
      </div>

      <BottomControls />

      <footer className="mt-1 border-b-2 border-white pb-[2px]">
        <p className="h-4 truncate rounded-sm border border-[#b0ada6] px-[3px]">
          Синхронно установить текущую позицию всех линейных графиков - щелчок + Shift, перейти к соответствующему кадру - двойной щелчок
        </p>
      </footer>
      <div className="h-[1px]" />
    </div>
    <div className="h-[768px] w-1 shrink-0 bg-black" />
  </div>
);

export default App;
